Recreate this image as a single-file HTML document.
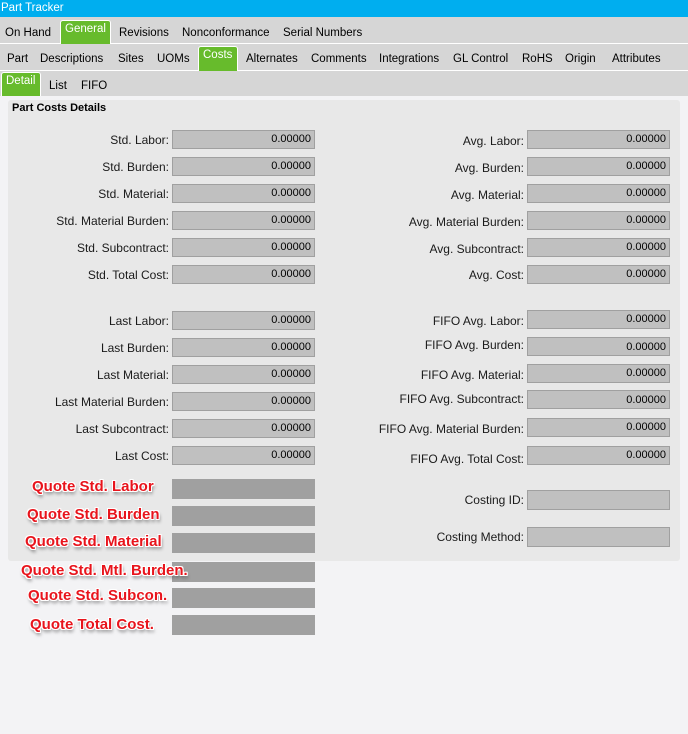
<!DOCTYPE html>
<html><head><meta charset="utf-8"><style>
*{margin:0;padding:0;box-sizing:border-box}
body{width:688px;height:734px;background:#f3f3f5;font-family:"Liberation Sans",Arial,sans-serif;font-size:12px;color:#000;position:relative;overflow:hidden}
.a{position:absolute}
.title{left:0;top:0;width:688px;height:17px;background:#00aeef;color:#fff;font-size:11.5px;line-height:16px;padding-left:1px}
.bar{left:0;width:688px;background:#d6d6d6;border-bottom:1px solid #fff}
.tab{position:absolute;line-height:14px;font-size:11.5px}
.act{position:absolute;background:#67bb2c;color:#fff;border:1px solid #fff;border-bottom:none;border-radius:3px 3px 0 0;padding:2px 4px 0;font-size:11.5px}
.panel{left:8px;top:100px;width:672px;height:461px;background:#e8e8e8;border-radius:3px}
.f{position:absolute;height:19px;width:143px;background:#c0c0c0;border:1px solid #a0a0a0;text-align:right;padding-right:3px;font-size:11px;line-height:17px}
.l{position:absolute;text-align:right;height:14px;line-height:14px;font-size:12px;color:#1a1a1a}
.q{position:absolute;height:20px;width:143px;background:#a0a0a0}
.r{position:absolute;color:#e8141c;font-weight:bold;font-size:15px;line-height:16px;white-space:nowrap;text-shadow:-1px -1px 0 #fff,1px -1px 0 #fff,-1px 1px 0 #fff,1px 1px 0 #fff,0 1px 0 #fff,0 -1px 0 #fff,1px 0 0 #fff,-1px 0 0 #fff,1px 3px 3px rgba(0,0,0,.5)}
</style></head><body>
<div class="a title">Part Tracker</div>
<div class="a bar" style="top:17px;height:27px">
<span class="tab" style="left:5px;top:9px">On Hand</span>
<div class="act" style="left:60px;top:3px;height:24px;width:51px">General</div>
<span class="tab" style="left:119px;top:9px">Revisions</span>
<span class="tab" style="left:182px;top:9px">Nonconformance</span>
<span class="tab" style="left:283px;top:9px">Serial Numbers</span>
</div>
<div class="a bar" style="top:44px;height:27px">
<span class="tab" style="left:7px;top:8px">Part</span>
<span class="tab" style="left:40px;top:8px">Descriptions</span>
<span class="tab" style="left:118px;top:8px">Sites</span>
<span class="tab" style="left:157px;top:8px">UOMs</span>
<div class="act" style="left:198px;top:2px;height:25px;width:40px">Costs</div>
<span class="tab" style="left:246px;top:8px">Alternates</span>
<span class="tab" style="left:311px;top:8px">Comments</span>
<span class="tab" style="left:379px;top:8px">Integrations</span>
<span class="tab" style="left:453px;top:8px">GL Control</span>
<span class="tab" style="left:522px;top:8px">RoHS</span>
<span class="tab" style="left:565px;top:8px">Origin</span>
<span class="tab" style="left:612px;top:8px">Attributes</span>
</div>
<div class="a bar" style="top:71px;height:25px;border-bottom:none">
<div class="act" style="left:1px;top:1px;height:24px;width:40px">Detail</div>
<span class="tab" style="left:49px;top:8px">List</span>
<span class="tab" style="left:81px;top:8px">FIFO</span>
</div>
<div class="a panel"></div>
<div class="a" style="left:12px;top:102px;font-weight:bold;font-size:11px">Part Costs Details</div>

<div class="l" style="right:519px;top:133px">Std. Labor:</div><div class="f" style="left:172px;top:130px">0.00000</div>
<div class="l" style="right:519px;top:160px">Std. Burden:</div><div class="f" style="left:172px;top:157px">0.00000</div>
<div class="l" style="right:519px;top:187px">Std. Material:</div><div class="f" style="left:172px;top:184px">0.00000</div>
<div class="l" style="right:519px;top:214px">Std. Material Burden:</div><div class="f" style="left:172px;top:211px">0.00000</div>
<div class="l" style="right:519px;top:241px">Std. Subcontract:</div><div class="f" style="left:172px;top:238px">0.00000</div>
<div class="l" style="right:519px;top:268px">Std. Total Cost:</div><div class="f" style="left:172px;top:265px">0.00000</div>
<div class="l" style="right:519px;top:314px">Last Labor:</div><div class="f" style="left:172px;top:311px">0.00000</div>
<div class="l" style="right:519px;top:341px">Last Burden:</div><div class="f" style="left:172px;top:338px">0.00000</div>
<div class="l" style="right:519px;top:368px">Last Material:</div><div class="f" style="left:172px;top:365px">0.00000</div>
<div class="l" style="right:519px;top:395px">Last Material Burden:</div><div class="f" style="left:172px;top:392px">0.00000</div>
<div class="l" style="right:519px;top:422px">Last Subcontract:</div><div class="f" style="left:172px;top:419px">0.00000</div>
<div class="l" style="right:519px;top:449px">Last Cost:</div><div class="f" style="left:172px;top:446px">0.00000</div>

<div class="l" style="right:164px;top:134px">Avg. Labor:</div><div class="f" style="left:527px;top:130px">0.00000</div>
<div class="l" style="right:164px;top:161px">Avg. Burden:</div><div class="f" style="left:527px;top:157px">0.00000</div>
<div class="l" style="right:164px;top:188px">Avg. Material:</div><div class="f" style="left:527px;top:184px">0.00000</div>
<div class="l" style="right:164px;top:215px">Avg. Material Burden:</div><div class="f" style="left:527px;top:211px">0.00000</div>
<div class="l" style="right:164px;top:242px">Avg. Subcontract:</div><div class="f" style="left:527px;top:238px">0.00000</div>
<div class="l" style="right:164px;top:268px">Avg. Cost:</div><div class="f" style="left:527px;top:265px">0.00000</div>
<div class="l" style="right:164px;top:314px">FIFO Avg. Labor:</div><div class="f" style="left:527px;top:310px">0.00000</div>
<div class="l" style="right:164px;top:338px">FIFO Avg. Burden:</div><div class="f" style="left:527px;top:337px;line-height:19px">0.00000</div>
<div class="l" style="right:164px;top:368px">FIFO Avg. Material:</div><div class="f" style="left:527px;top:364px">0.00000</div>
<div class="l" style="right:164px;top:392px">FIFO Avg. Subcontract:</div><div class="f" style="left:527px;top:390px;line-height:19px">0.00000</div>
<div class="l" style="right:164px;top:422px">FIFO Avg. Material Burden:</div><div class="f" style="left:527px;top:418px">0.00000</div>
<div class="l" style="right:164px;top:452px">FIFO Avg. Total Cost:</div><div class="f" style="left:527px;top:446px">0.00000</div>
<div class="l" style="right:164px;top:493px">Costing ID:</div><div class="f" style="left:527px;top:490px;height:20px"></div>
<div class="l" style="right:164px;top:530px">Costing Method:</div><div class="f" style="left:527px;top:527px;height:20px"></div>

<div class="q" style="left:172px;top:479px"></div><div class="r" style="left:32px;top:479px">Quote Std. Labor</div>
<div class="q" style="left:172px;top:506px"></div><div class="r" style="left:27px;top:507px">Quote Std. Burden</div>
<div class="q" style="left:172px;top:533px"></div><div class="r" style="left:25px;top:534px">Quote Std. Material</div>
<div class="q" style="left:172px;top:562px"></div><div class="r" style="left:21px;top:563px">Quote Std. Mtl. Burden.</div>
<div class="q" style="left:172px;top:588px"></div><div class="r" style="left:28px;top:588px">Quote Std. Subcon.</div>
<div class="q" style="left:172px;top:615px"></div><div class="r" style="left:30px;top:617px">Quote Total Cost.</div>
</body></html>
